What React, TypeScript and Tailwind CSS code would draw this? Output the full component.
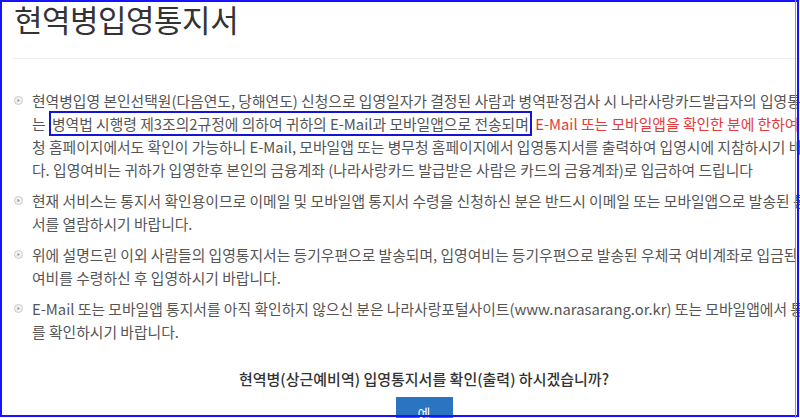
import React from "react";

const Bullet = () => (
    <svg width="9" height="9" viewBox="0 0 9 9" className="shrink-0">
        <circle cx="4.5" cy="4.5" r="4" fill="#f3f3f3" stroke="#c9c9c9" strokeWidth="1" />
        <path d="M3.5 2.8 L6 4.5 L3.5 6.2 Z" fill="#9a9a9a" />
    </svg>
);

const Item = ({ lines }: { lines: React.ReactNode[] }) => (
    <li className="flex items-start">
        <div className="w-[18px] h-[23px] flex items-center shrink-0">
            <Bullet />
        </div>
        <div className="flex-1">
            {lines.map((l, i) => (
                <div key={i} className="whitespace-nowrap h-[23px] leading-[23px]">
                    {l}
                </div>
            ))}
        </div>
    </li>
);

export default function App() {
    return (
        <div
            className="relative w-[800px] h-[418px] overflow-hidden bg-white text-[#555]"
            style={{ fontFamily: '"Noto Sans CJK KR", "Noto Sans", sans-serif' }}
        >
            <div className="pl-[14px] w-[860px]">
                <h1 className="text-[31px] leading-[40px] -mt-px text-[#333] font-normal tracking-[-0.5px]">
                    현역병입영통지서
                </h1>
                <div className="mt-[19px] h-px bg-[#ececec] w-[826px] -ml-px" />

                <ul className="mt-[30px] flex flex-col gap-[8px] text-[14.8px]">
                    <Item
                        lines={[
                            "현역병입영 본인선택원(다음연도, 당해연도) 신청으로 입영일자가 결정된 사람과 병역판정검사 시 나라사랑카드발급자의 입영통지서",
                            <>
                                는{" "}
                                <span className="border-2 border-[#1414d8] px-px">
                                    병역법 시행령 제3조의2규정에 의하여 귀하의 E-Mail과 모바일앱으로 전송되며
                                </span>{" "}
                                <span className="text-[#e23b3b]">E-Mail 또는 모바일앱을 확인한 분에 한하여 병무</span>
                            </>,
                            "청 홈페이지에서도 확인이 가능하니 E-Mail, 모바일앱 또는 병무청 홈페이지에서 입영통지서를 출력하여 입영시에 지참하시기 바랍니",
                            "다. 입영여비는 귀하가 입영한후 본인의 금융계좌 (나라사랑카드 발급받은 사람은 카드의 금융계좌)로 입금하여 드립니다",
                        ]}
                    />
                    <Item
                        lines={[
                            "현재 서비스는 통지서 확인용이므로 이메일 및 모바일앱 통지서 수령을 신청하신 분은 반드시 이메일 또는 모바일앱으로 발송된 통지",
                            "서를 열람하시기 바랍니다.",
                        ]}
                    />
                    <Item
                        lines={[
                            "위에 설명드린 이외 사람들의 입영통지서는 등기우편으로 발송되며, 입영여비는 등기우편으로 발송된 우체국 여비계좌로 입금된 후 입영",
                            "여비를 수령하신 후 입영하시기 바랍니다.",
                        ]}
                    />
                    <Item
                        lines={[
                            "E-Mail 또는 모바일앱 통지서를 아직 확인하지 않으신 분은 나라사랑포털사이트(www.narasarang.or.kr) 또는 모바일앱에서 통지서",
                            "를 확인하시기 바랍니다.",
                        ]}
                    />
                </ul>

                <div className="w-[820px] flex flex-col items-center">
                    <p className="mt-[24px] text-[15px] leading-[23px] text-[#333] font-medium">
                        현역병(상근예비역) 입영통지서를 확인(출력) 하시겠습니까?
                    </p>
                    <button className="mt-[7px] w-[57px] h-[32px] bg-[#2a74c2] text-white text-[14px]">
                        예
                    </button>
                </div>
            </div>

            <div className="absolute left-0 top-0 w-[799px] h-[417px] border-2 border-[#1414ff] pointer-events-none" />
            <div className="absolute left-[795px] top-0 w-px h-[418px] bg-[#8a8aff] pointer-events-none" />
        </div>
    );
}
